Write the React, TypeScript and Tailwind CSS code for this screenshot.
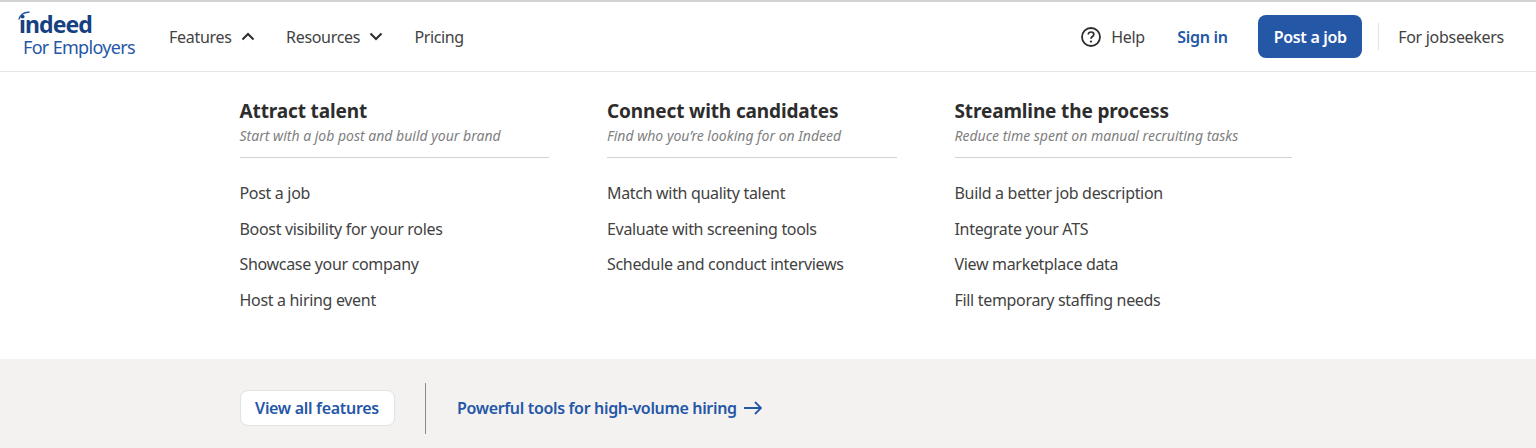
import React from "react";

function Chevron({ up }: { up?: boolean }) {
  return (
    <svg width="14" height="9" viewBox="0 0 14 9" fill="none" stroke="#2d2d2d" strokeWidth="2" className="ml-[9px]">
      <path d={up ? "M1.5 7.5L7 2l5.5 5.5" : "M1.5 1.5L7 7l5.5-5.5"} />
    </svg>
  );
}

const cols = [
  {
    w: "w-[309.5px]",
    title: "Attract talent",
    sub: "Start with a job post and build your brand",
    items: ["Post a job", "Boost visibility for your roles", "Showcase your company", "Host a hiring event"],
  },
  {
    w: "w-[289.5px]",
    title: "Connect with candidates",
    sub: "Find who you’re looking for on Indeed",
    items: ["Match with quality talent", "Evaluate with screening tools", "Schedule and conduct interviews"],
  },
  {
    w: "w-[337px]",
    title: "Streamline the process",
    sub: "Reduce time spent on manual recruiting tasks",
    items: ["Build a better job description", "Integrate your ATS", "View marketplace data", "Fill temporary staffing needs"],
  },
];

export default function App() {
  return (
    <div className="w-[1536px] h-[448px] overflow-hidden bg-white font-['Noto_Sans',sans-serif] text-[#424242] flex flex-col antialiased">
      <header className="h-[72px] shrink-0 border-t-2 border-t-[#d4d2d0] border-b border-b-[#e8e6e4] flex items-center pl-[18px] pr-[32px]">
        <div className="w-[151px] flex flex-col text-[#2557a7] -mt-[1px]">
          <div className="relative h-[21px] leading-[21px] text-[23px] font-bold tracking-[-0.9px] text-[#164081] pl-[1px]">
            indeed
            <svg width="16" height="10" viewBox="0 0 16 10" fill="none" className="absolute left-0 -top-[3px]">
              <path d="M0.8 8.5C2.5 3.5 6.5 0.8 11.5 1.3" stroke="#2557a7" strokeWidth="1.4" />
            </svg>
          </div>
          <div className="pl-[5px] text-[18px] leading-[24px] tracking-[-0.68px] whitespace-nowrap">For Employers</div>
        </div>
        <nav className="flex items-center text-[16px] tracking-[-0.3px]">
          <span className="flex items-center w-[117px]">Features<Chevron up /></span>
          <span className="flex items-center w-[128.5px]">Resources<Chevron /></span>
          <span className="tracking-[-0.4px]">Pricing</span>
        </nav>
        <div className="ml-auto flex items-center text-[16px] tracking-[-0.3px]">
          <svg width="22" height="22" viewBox="0 0 22 22" fill="none" className="mr-[9px]">
            <circle cx="11" cy="11" r="9" stroke="#2d2d2d" strokeWidth="1.8" />
            <path d="M8.3 8.6c0-1.6 1.2-2.6 2.8-2.6s2.7 1 2.7 2.4c0 2.2-2.8 2.1-2.8 4.3" stroke="#2d2d2d" strokeWidth="1.7" />
            <circle cx="11" cy="15.6" r="1.1" fill="#2d2d2d" />
          </svg>
          <span className="w-[66px]">Help</span>
          <span className="w-[81px] font-semibold text-[#2557a7]">Sign in</span>
          <span className="w-[104px] h-[43px] rounded-[8px] bg-[#2557a7] text-white font-semibold flex items-center justify-center">Post a job</span>
          <span className="ml-[16px] h-[27px] border-l border-[#e4e2e0]" />
          <span className="ml-[19px]">For jobseekers</span>
        </div>
      </header>
      <main className="h-[287px] shrink-0 flex gap-[58px] pl-[239.5px] pt-[26px]">
        {cols.map((c) => (
          <section key={c.title} className={c.w}>
            <h2 className="text-[19px] leading-[26px] font-bold text-[#2d2d2d] tracking-[-0.13px] whitespace-nowrap">{c.title}</h2>
            <p className="text-[14px] leading-[23px] italic text-[#808080] whitespace-nowrap">{c.sub}</p>
            <div className="h-[11px] border-b border-[#d4d2d0]" />
            <ul className="mt-[24px] flex flex-col gap-[12.6px] text-[16px] leading-[23px] tracking-[-0.32px]">
              {c.items.map((i) => (
                <li key={i} className="whitespace-nowrap">{i}</li>
              ))}
            </ul>
          </section>
        ))}
      </main>
      <footer className="flex-1 bg-[#f3f2f1] flex items-center pl-[239.5px] pt-[9px]">
        <span className="w-[155px] h-[36px] rounded-[8px] bg-white border border-[#e4e2e0] flex items-center justify-center text-[16px] tracking-[-0.3px] font-semibold text-[#2557a7]">View all features</span>
        <span className="ml-[30.5px] h-[51px] border-l border-[#8c8c8c]" />
        <span className="ml-[31px] flex items-center text-[16px] tracking-[-0.34px] font-semibold text-[#2557a7]">
          Powerful tools for high-volume hiring
          <svg width="18" height="14" viewBox="0 0 18 14" fill="none" stroke="#2557a7" strokeWidth="1.8" className="ml-[7px]">
            <path d="M0 7h17M11 1l6 6-6 6" />
          </svg>
        </span>
      </footer>
    </div>
  );
}
